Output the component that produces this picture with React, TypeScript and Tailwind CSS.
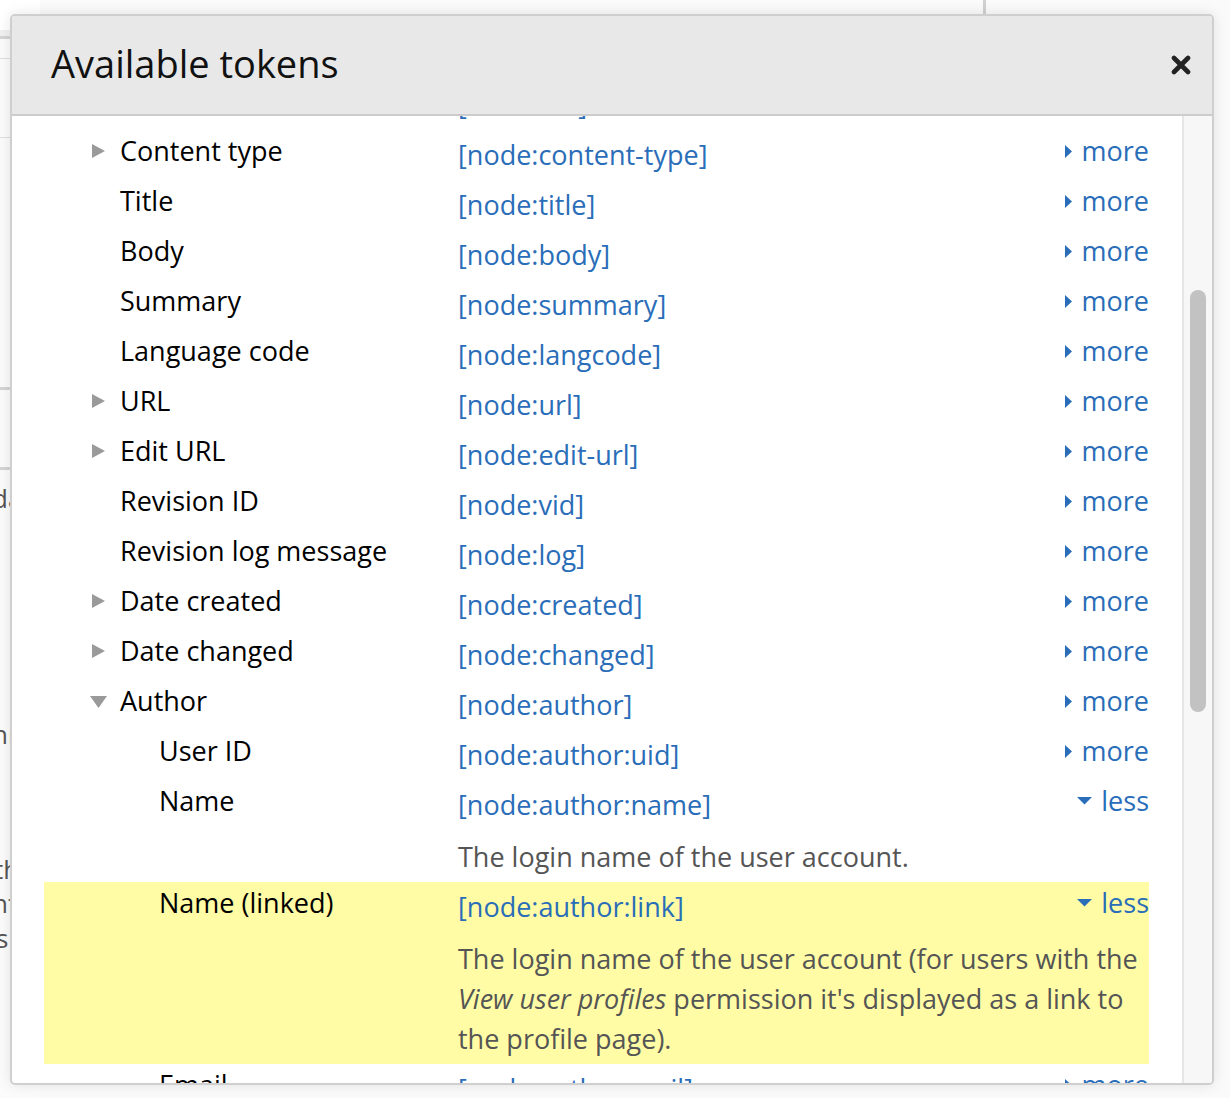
import React from 'react';

type Expander = 'closed' | 'open' | undefined;

interface TokenRow {
  label: string;
  token: string;
  level: 1 | 2;
  expander?: Expander;
  open?: boolean;
  highlight?: boolean;
  description?: React.ReactNode;
}

const rows: TokenRow[] = [
  { label: 'Content ID', token: '[node:nid]', level: 1 },
  { label: 'Content type', token: '[node:content-type]', level: 1, expander: 'closed' },
  { label: 'Title', token: '[node:title]', level: 1 },
  { label: 'Body', token: '[node:body]', level: 1 },
  { label: 'Summary', token: '[node:summary]', level: 1 },
  { label: 'Language code', token: '[node:langcode]', level: 1 },
  { label: 'URL', token: '[node:url]', level: 1, expander: 'closed' },
  { label: 'Edit URL', token: '[node:edit-url]', level: 1, expander: 'closed' },
  { label: 'Revision ID', token: '[node:vid]', level: 1 },
  { label: 'Revision log message', token: '[node:log]', level: 1 },
  { label: 'Date created', token: '[node:created]', level: 1, expander: 'closed' },
  { label: 'Date changed', token: '[node:changed]', level: 1, expander: 'closed' },
  { label: 'Author', token: '[node:author]', level: 1, expander: 'open' },
  { label: 'User ID', token: '[node:author:uid]', level: 2 },
  {
    label: 'Name',
    token: '[node:author:name]',
    level: 2,
    open: true,
    description: 'The login name of the user account.',
  },
  {
    label: 'Name (linked)',
    token: '[node:author:link]',
    level: 2,
    open: true,
    highlight: true,
    description: (
      <>
        The login name of the user account (for users with the <em>View user profiles</em> permission it's
        displayed as a link to the profile page).
      </>
    ),
  },
  { label: 'Email', token: '[node:author:mail]', level: 2 },
];

const TreeToggle = ({ state }: { state: Expander }) => {
  if (state === 'closed') {
    return (
      <svg width="13" height="14" viewBox="0 0 13 14" className="mt-[9px]">
        <path d="M0 0L13 7L0 14Z" fill="#9a9a9a" />
      </svg>
    );
  }
  if (state === 'open') {
    return (
      <svg width="17" height="12" viewBox="0 0 17 12" className="-ml-[2px] mt-[11px]">
        <path d="M0 0H17L8.5 12Z" fill="#9a9a9a" />
      </svg>
    );
  }
  return null;
};

const MoreLink = ({ open }: { open?: boolean }) => (
  <a className="flex items-center gap-[9px] leading-[32px] text-[#2a6db8] whitespace-nowrap">
    {open ? (
      <svg width="15" height="8" viewBox="0 0 15 8">
        <path d="M0 0H15L7.5 7.5Z" fill="#2a6db8" />
      </svg>
    ) : (
      <svg width="7" height="13" viewBox="0 0 7 13" className="mr-[1px]">
        <path d="M0 0L7 6.5L0 13Z" fill="#2a6db8" />
      </svg>
    )}
    <span>{open ? 'less' : 'more'}</span>
  </a>
);

const Row = ({ row }: { row: TokenRow }) => (
  <div className={`flex py-[5px] ${row.highlight ? 'bg-[#fffca5]' : ''}`}>
    <div className={`w-[414px] shrink-0 flex ${row.level === 1 ? 'pl-[48px]' : 'pl-[87px]'}`}>
      <span className="w-[28px] shrink-0">
        <TreeToggle state={row.expander} />
      </span>
      <span className="leading-[32px] text-black whitespace-nowrap">{row.label}</span>
    </div>
    <div className="flex-1 min-w-0 flex flex-col">
      <div className="flex justify-between items-start">
        <a className="leading-[40px] text-[#2a6db8]">{row.token}</a>
        <MoreLink open={row.open} />
      </div>
      {row.description && <p className="mt-[12px] leading-[40px] text-[#555]">{row.description}</p>}
    </div>
  </div>
);

const BackgroundPage = () => (
  <div className="flex h-full">
    <div className="w-[40px] shrink-0 flex flex-col bg-[#fbfbfb] text-[26px] text-[#555] overflow-hidden">
      <div className="h-[30px] bg-white" />
      <div className="h-[6px] bg-[#f0f0f0]" />
      <div className="h-[3px] bg-[#d4d4d4]" />
      <div className="h-[19px]" />
      <div className="h-px bg-[#dedede]" />
      <div className="h-[78px]" />
      <div className="h-px bg-[#dedede]" />
      <div className="h-[249px]" />
      <div className="h-[3px] bg-[#d4d4d4]" />
      <div className="h-[77px]" />
      <div className="h-[3px] bg-[#d4d4d4]" />
      <div className="whitespace-nowrap leading-[40px] mt-[8px] -ml-[8px]">da</div>
      <div className="whitespace-nowrap leading-[40px] mt-[196px] -ml-[8px]">nr</div>
      <div className="whitespace-nowrap leading-[34px] mt-[98px] -ml-[6px]">th</div>
      <div className="whitespace-nowrap leading-[34px] -ml-[8px]">nt</div>
      <div className="whitespace-nowrap leading-[36px] -ml-[4px]">s</div>
    </div>
    <div className="flex-1 flex justify-end bg-[#fafafa]">
      <div className="w-[3px] h-[14px] bg-[#d0d0d0] mr-[244px]" />
    </div>
  </div>
);

export default function App() {
  return (
    <div className="relative w-[1230px] h-[1098px] overflow-hidden bg-[#f6f6f6] font-['Open_Sans',sans-serif]">
      <BackgroundPage />

      <div className="absolute left-[10px] top-[14px] w-[1204px] h-[1071px] flex flex-col bg-white border-2 border-[#cfcfcf] rounded-[5px] shadow-[0_0_14px_rgba(0,0,0,0.10)] overflow-hidden">
        <div className="h-[100px] shrink-0 flex items-center justify-between pl-[39px] pr-[21px] bg-[#e8e8e8] border-b-2 border-[#cccccc]">
          <h2 className="-mt-[3px] text-[38px] text-[#111] font-normal">Available tokens</h2>
          <button className="-mt-[1px] w-[20px] h-[20px] flex items-center justify-center">
            <svg width="20" height="20" viewBox="0 0 20 20">
              <path d="M3 3L17 17M17 3L3 17" stroke="#222" strokeWidth="4.6" strokeLinecap="round" />
            </svg>
          </button>
        </div>

        <div className="flex-1 min-h-0 flex">
          <div className="flex-1 min-w-0 overflow-hidden pl-[32px] pr-[33px] text-[27px]">
            <div className="-mt-[36px]">
              {rows.map(row => (
                <Row key={row.token} row={row} />
              ))}
            </div>
          </div>
          <div className="w-[30px] shrink-0 bg-[#f7f7f7] border-l-2 border-[#e6e6e6] pl-[6px]">
            <div className="mt-[174px] w-[16px] h-[422px] rounded-full bg-[#c2c2c2]" />
          </div>
        </div>
      </div>
    </div>
  );
}
